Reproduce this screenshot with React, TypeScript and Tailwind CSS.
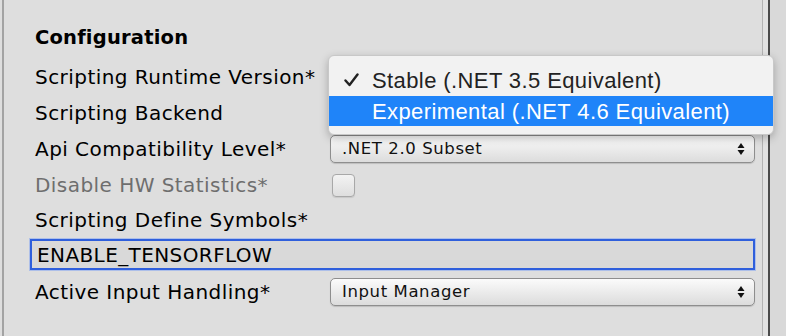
import React from "react";

const label = "font-['DejaVu_Sans',sans-serif] text-[20px] text-black tracking-[0.45px]";

function Arrows() {
  return (
    <svg width="8" height="14" viewBox="0 0 8 14" className="block">
      <path d="M4 1 L7.5 6 L0.5 6 Z" fill="#111" />
      <path d="M4 13 L7.5 8 L0.5 8 Z" fill="#111" />
    </svg>
  );
}

function Select({ text }: { text: string }) {
  return (
    <div className="flex h-[28px] w-[425px] shrink-0 items-center justify-between rounded-[5px] border border-[#8e8e8e] bg-gradient-to-b from-[#fbfbfb] to-[#dcdcdc] pl-[11px] pr-[9px] shadow-[0_1px_1px_rgba(0,0,0,0.15)]">
      <span className="font-['DejaVu_Sans',sans-serif] text-[16.5px] leading-none text-[#111] tracking-[0.6px]">{text}</span>
      <Arrows />
    </div>
  );
}

export default function App() {
  return (
    <div className="relative flex h-[336px] w-[786px] bg-[#dedede] overflow-hidden">
      <div className="w-[2px] shrink-0" />
      <div className="w-[2px] shrink-0 bg-[#a3a3a3]" />
      <div className="flex w-[758px] shrink-0 flex-col pt-[20px]">
        <div className="flex h-[36px] items-center pl-[31px]">
          <span className="font-['DejaVu_Sans',sans-serif] text-[19.5px] font-bold text-black tracking-[0.2px]">Configuration</span>
        </div>
        <div className="mt-[3px] flex h-[36px] items-center pl-[31px]">
          <span className={label}>Scripting Runtime Version*</span>
        </div>
        <div className="flex h-[36px] items-center pl-[31px]">
          <span className={label}>Scripting Backend</span>
        </div>
        <div className="flex h-[36px] items-center pl-[31px]">
          <span className={label + " w-[295px] shrink-0 whitespace-nowrap"}>Api Compatibility Level*</span>
          <Select text=".NET 2.0 Subset" />
        </div>
        <div className="flex h-[36px] items-center pl-[31px]">
          <span className={"font-['DejaVu_Sans',sans-serif] text-[20px] tracking-[0.45px] text-[#6e6e6e] w-[297px] shrink-0 whitespace-nowrap"}>Disable HW Statistics*</span>
          <div className="h-[23px] w-[23px] rounded-[4px] border border-[#a8a8a8] bg-gradient-to-b from-[#f3f3f3] to-[#dedede] shadow-[0_1px_1px_rgba(0,0,0,0.1)]" />
        </div>
        <div className="flex h-[34px] items-center pl-[31px]">
          <span className={label}>Scripting Define Symbols*</span>
        </div>
        <div className="mt-[2px] flex h-[35px] items-start pl-[26px]">
          <div className="flex h-[31px] w-[725px] items-center border-2 border-[#2f5fdc] bg-[#d9d9d9] pl-[5px] shadow-[0_0_0_1px_rgba(140,170,240,0.6)]">
            <span className="font-['DejaVu_Sans',sans-serif] text-[20px] tracking-[0.4px] text-black">ENABLE_TENSORFLOW</span>
          </div>
        </div>
        <div className="flex h-[36px] items-center pl-[31px]">
          <span className={label + " w-[295px] shrink-0 whitespace-nowrap"}>Active Input Handling*</span>
          <Select text="Input Manager" />
        </div>
      </div>
      <div className="w-[1px] shrink-0 bg-[#b3b3b3]" />
      <div className="w-[5px] shrink-0 bg-[#e2e2e2]" />
      <div className="w-[2px] shrink-0 bg-[#4a4a4a]" />
      <div className="flex-1 bg-[#d9d9d9]" />

      <div className="absolute left-[328px] top-[55px] h-[80px] w-[446px] overflow-hidden rounded-[6px] border border-[#c8c8c8] bg-[#f2f2f2] shadow-[0_3px_8px_rgba(0,0,0,0.25)]">
        <div className="flex h-[40px] items-center pt-[8px]">
          <div className="flex w-[43px] justify-end pr-[13px]">
            <svg width="15" height="14" viewBox="0 0 15 14">
              <path d="M1.5 7.5 L5.5 12 L13.5 1.5" fill="none" stroke="#222" strokeWidth="2.4" strokeLinecap="round" strokeLinejoin="round" />
            </svg>
          </div>
          <span className="font-['Liberation_Sans',sans-serif] text-[22px] text-[#222] tracking-[0.4px]">Stable (.NET 3.5 Equivalent)</span>
        </div>
        <div className="flex h-[30px] items-center bg-[#1f84f9] pl-[43px]">
          <span className="font-['Liberation_Sans',sans-serif] text-[22px] text-white tracking-[0.4px]">Experimental (.NET 4.6 Equivalent)</span>
        </div>
      </div>
    </div>
  );
}
